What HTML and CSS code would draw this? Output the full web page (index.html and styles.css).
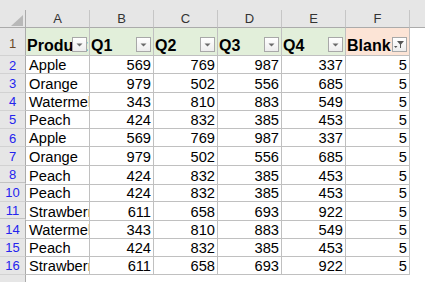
FILE: index.html
```html
<!DOCTYPE html>
<html>
<head>
<meta charset="utf-8">
<link rel="stylesheet" href="styles.css">
</head>
<body>
<div class="sheet">
  <div class="strip"></div>
  <div class="row colheads">
    <div class="corner"><svg width="12" height="11" viewBox="0 0 12 11"><polygon points="12,0 12,11 0,11" fill="#b8b8b8"/></svg></div>
    <div class="ch">A</div><div class="ch">B</div><div class="ch">C</div><div class="ch">D</div><div class="ch">E</div><div class="ch">F</div><div class="ch rest"></div>
  </div>
  <div class="row head">
    <div class="rh first">1</div>
    <div class="cell"><span>Product</span><span class="fb"><svg width="13" height="13" viewBox="0 0 13 13"><polygon points="3.5,5.5 9.5,5.5 6.5,8.5" fill="#6a6a6a"/></svg></span></div>
    <div class="cell"><span>Q1</span><span class="fb"><svg width="13" height="13" viewBox="0 0 13 13"><polygon points="3.5,5.5 9.5,5.5 6.5,8.5" fill="#6a6a6a"/></svg></span></div>
    <div class="cell"><span>Q2</span><span class="fb"><svg width="13" height="13" viewBox="0 0 13 13"><polygon points="3.5,5.5 9.5,5.5 6.5,8.5" fill="#6a6a6a"/></svg></span></div>
    <div class="cell"><span>Q3</span><span class="fb"><svg width="13" height="13" viewBox="0 0 13 13"><polygon points="3.5,5.5 9.5,5.5 6.5,8.5" fill="#6a6a6a"/></svg></span></div>
    <div class="cell"><span>Q4</span><span class="fb"><svg width="13" height="13" viewBox="0 0 13 13"><polygon points="3.5,5.5 9.5,5.5 6.5,8.5" fill="#6a6a6a"/></svg></span></div>
    <div class="cell blank"><span>Blank</span><span class="fb"><svg width="13" height="13" viewBox="0 0 13 13"><polygon points="4,3 11,3 8,6.5 8,10 7,10 7,6.5" fill="#555"/><polygon points="1,8 4.5,8 2.75,10" fill="#555"/></svg></span></div>
    <div class="empty"></div>
  </div>
  <div class="row data"><div class="rh">2</div><div class="cell">Apple</div><div class="cell num">569</div><div class="cell num">769</div><div class="cell num">987</div><div class="cell num">337</div><div class="cell num">5</div><div class="empty"></div></div>
  <div class="row data"><div class="rh">3</div><div class="cell">Orange</div><div class="cell num">979</div><div class="cell num">502</div><div class="cell num">556</div><div class="cell num">685</div><div class="cell num">5</div><div class="empty"></div></div>
  <div class="row data"><div class="rh">4</div><div class="cell">Watermelon</div><div class="cell num">343</div><div class="cell num">810</div><div class="cell num">883</div><div class="cell num">549</div><div class="cell num">5</div><div class="empty"></div></div>
  <div class="row data"><div class="rh">5</div><div class="cell">Peach</div><div class="cell num">424</div><div class="cell num">832</div><div class="cell num">385</div><div class="cell num">453</div><div class="cell num">5</div><div class="empty"></div></div>
  <div class="row data"><div class="rh">6</div><div class="cell">Apple</div><div class="cell num">569</div><div class="cell num">769</div><div class="cell num">987</div><div class="cell num">337</div><div class="cell num">5</div><div class="empty"></div></div>
  <div class="row data"><div class="rh">7</div><div class="cell">Orange</div><div class="cell num">979</div><div class="cell num">502</div><div class="cell num">556</div><div class="cell num">685</div><div class="cell num">5</div><div class="empty"></div></div>
  <div class="row data"><div class="rh hid">8</div><div class="cell">Peach</div><div class="cell num">424</div><div class="cell num">832</div><div class="cell num">385</div><div class="cell num">453</div><div class="cell num">5</div><div class="empty"></div></div>
  <div class="row data"><div class="rh">10</div><div class="cell">Peach</div><div class="cell num">424</div><div class="cell num">832</div><div class="cell num">385</div><div class="cell num">453</div><div class="cell num">5</div><div class="empty"></div></div>
  <div class="row data"><div class="rh hid">11</div><div class="cell">Strawberry</div><div class="cell num">611</div><div class="cell num">658</div><div class="cell num">693</div><div class="cell num">922</div><div class="cell num">5</div><div class="empty"></div></div>
  <div class="row data"><div class="rh">14</div><div class="cell">Watermelon</div><div class="cell num">343</div><div class="cell num">810</div><div class="cell num">883</div><div class="cell num">549</div><div class="cell num">5</div><div class="empty"></div></div>
  <div class="row data"><div class="rh">15</div><div class="cell">Peach</div><div class="cell num">424</div><div class="cell num">832</div><div class="cell num">385</div><div class="cell num">453</div><div class="cell num">5</div><div class="empty"></div></div>
  <div class="row data"><div class="rh">16</div><div class="cell">Strawberry</div><div class="cell num">611</div><div class="cell num">658</div><div class="cell num">693</div><div class="cell num">922</div><div class="cell num">5</div><div class="empty"></div></div>
  <div class="row fill"><div class="rh last"></div><div class="empty"></div></div>
</div>
</body>
</html>
```
FILE: styles.css
```css
html, body {
  margin: 0;
  padding: 0;
  background: #ffffff;
}
body {
  font-family: "Liberation Sans", Arial, sans-serif;
}
.sheet {
  width: 425px;
  height: 282px;
  overflow: hidden;
  display: flex;
  flex-direction: column;
}
.strip {
  height: 10px;
  flex: none;
  background: #e6e6e6;
}
.row {
  display: grid;
  grid-template-columns: 26px repeat(6, 64px) 1fr;
  flex: none;
}
.row > div {
  box-sizing: border-box;
  min-width: 0;
}
.colheads {
  height: 18px;
}
.corner {
  background: #e6e6e6;
  border-right: 1px solid #ababab;
  border-bottom: 1px solid #ababab;
  display: flex;
  align-items: flex-end;
  justify-content: flex-end;
  padding: 0 2px 1px 0;
}
.ch {
  background: #e6e6e6;
  border-right: 1px solid #c6c6c6;
  border-bottom: 1px solid #ababab;
  display: flex;
  align-items: center;
  justify-content: center;
  font-size: 13px;
  color: #333;
}
.ch.rest {
  border-right: none;
}
.rh {
  background: #e6e6e6;
  border-right: 1px solid #ababab;
  border-bottom: 1px solid #d2d2d2;
  display: flex;
  align-items: center;
  justify-content: center;
  font-size: 13px;
  color: #2424ee;
  padding-top: 1px;
}
.rh.first {
  color: #6b4a2a;
  padding-top: 3px;
}
.rh.hid {
  border-bottom: 3px double #c2c2c2;
}
.rh.last {
  border-bottom: none;
}
.cell {
  border-right: 1px solid #c0c0c0;
  border-bottom: 1px solid #c0c0c0;
  font-size: 14.67px;
  line-height: 16px;
  color: #000;
  overflow: hidden;
  white-space: nowrap;
  display: flex;
  align-items: flex-end;
  padding: 0 2px 0 3px;
}
.num {
  justify-content: flex-end;
}
.head {
  height: 28px;
}
.head .cell {
  background: #e2efda;
  font-weight: bold;
  font-size: 16px;
  line-height: 18px;
  position: relative;
  padding-left: 1px;
}
.head .cell.blank {
  background: #fce4d6;
}
.fb {
  position: absolute;
  right: 2px;
  bottom: 3px;
  width: 15px;
  height: 15px;
  box-sizing: border-box;
  border: 1px solid #a8a8a8;
  background: linear-gradient(#ffffff, #ededed);
  display: flex;
}
.fb svg {
  display: block;
}
.data {
  height: 18.25px;
}
.empty {
  background: #fff;
}
.fill {
  flex: 1;
}
```
